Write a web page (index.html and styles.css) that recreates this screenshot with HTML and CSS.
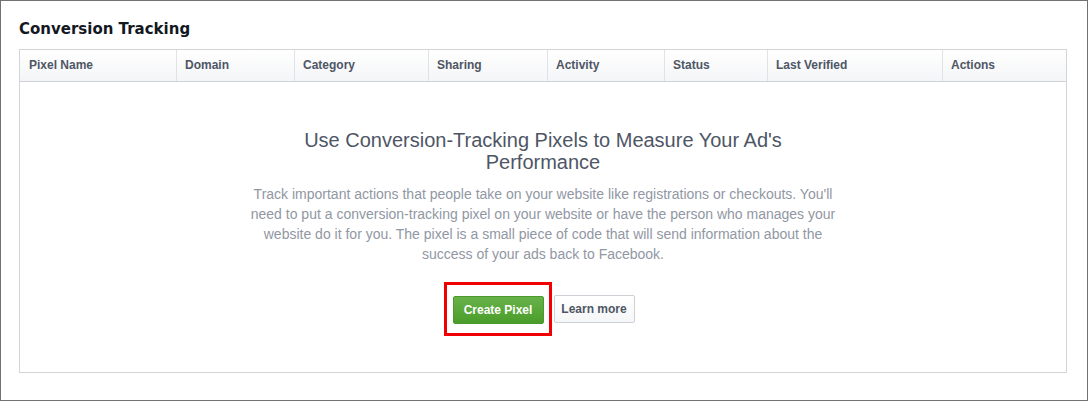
FILE: index.html
```html
<!DOCTYPE html>
<html>
<head>
<meta charset="utf-8">
<link rel="stylesheet" href="styles.css">
</head>
<body>
<div class="frame">
  <h2 class="title">Conversion Tracking</h2>
  <div class="table">
    <div class="thead">
      <div class="th">Pixel Name</div>
      <div class="th">Domain</div>
      <div class="th">Category</div>
      <div class="th">Sharing</div>
      <div class="th">Activity</div>
      <div class="th">Status</div>
      <div class="th">Last Verified</div>
      <div class="th">Actions</div>
    </div>
    <div class="empty">
      <h3 class="empty-title">Use Conversion-Tracking Pixels to Measure Your Ad's Performance</h3>
      <p class="empty-text">Track important actions that people take on your website like registrations or checkouts. You'll need to put a conversion-tracking pixel on your website or have the person who manages your website do it for you. The pixel is a small piece of code that will send information about the success of your ads back to Facebook.</p>
      <div class="actions">
        <div class="highlight"><button class="btn btn-green">Create Pixel</button></div>
        <button class="btn btn-plain">Learn more</button>
      </div>
    </div>
  </div>
</div>
</body>
</html>
```

FILE: styles.css
```css
* { box-sizing: border-box; }
html, body { margin: 0; padding: 0; background: #fff; }
.frame {
  width: 1088px;
  height: 401px;
  border: 1px solid #717171;
  padding: 0 20px 0 18px;
}
.title {
  margin: 0;
  padding-top: 18px;
  height: 48px;
  font-family: "DejaVu Sans", sans-serif;
  font-weight: bold;
  font-size: 15px;
  line-height: 20px;
  color: #141823;
}
.table {
  border: 1px solid #d3d5d9;
  height: 324px;
  width: 1048px;
}
.thead {
  display: grid;
  grid-template-columns: 156px 118px 134px 119px 117px 103px 175px 1fr;
  height: 32px;
  border-bottom: 1px solid #cdd0d4;
  background: linear-gradient(#ffffff, #f4f5f7);
}
.th {
  font-family: "Liberation Sans", Arial, sans-serif;
  font-weight: bold;
  font-size: 12px;
  color: #4e5665;
  padding: 0 8px;
  line-height: 30px;
  border-left: 1px solid #e1e2e5;
}
.th:first-child { border-left: none; padding-left: 9px; }
.empty {
  display: flex;
  flex-direction: column;
  align-items: center;
  padding-top: 47px;
  font-family: "Liberation Sans", Arial, sans-serif;
}
.empty-title {
  margin: 0;
  width: 500px;
  text-align: center;
  font-weight: normal;
  font-size: 20px;
  line-height: 22px;
  color: #4e5665;
}
.empty-text {
  margin: 11px 0 0;
  width: 592px;
  text-align: center;
  font-size: 14px;
  line-height: 20px;
  color: #9197a3;
}
.actions {
  display: flex;
  align-items: center;
  margin-top: 18px;
  margin-right: 8px;
}
.highlight {
  border: 3px solid #f00000;
  padding: 11px 5px 9px 6px;
  margin-right: 2px;
}
.btn {
  font-family: "Liberation Sans", Arial, sans-serif;
  font-weight: bold;
  font-size: 12px;
  height: 28px;
  padding: 0;
  border-radius: 2px;
  display: block;
  white-space: nowrap;
  text-align: center;
}
.btn-green {
  width: 91px;
  color: #fff;
  border: 1px solid #4a9b2c;
  background: linear-gradient(#68b24a, #4a9d2a);
}
.btn-plain {
  width: 81px;
  color: #4e5665;
  border: 1px solid #cdd0d4;
  background: linear-gradient(#ffffff, #f5f6f7);
}
```
